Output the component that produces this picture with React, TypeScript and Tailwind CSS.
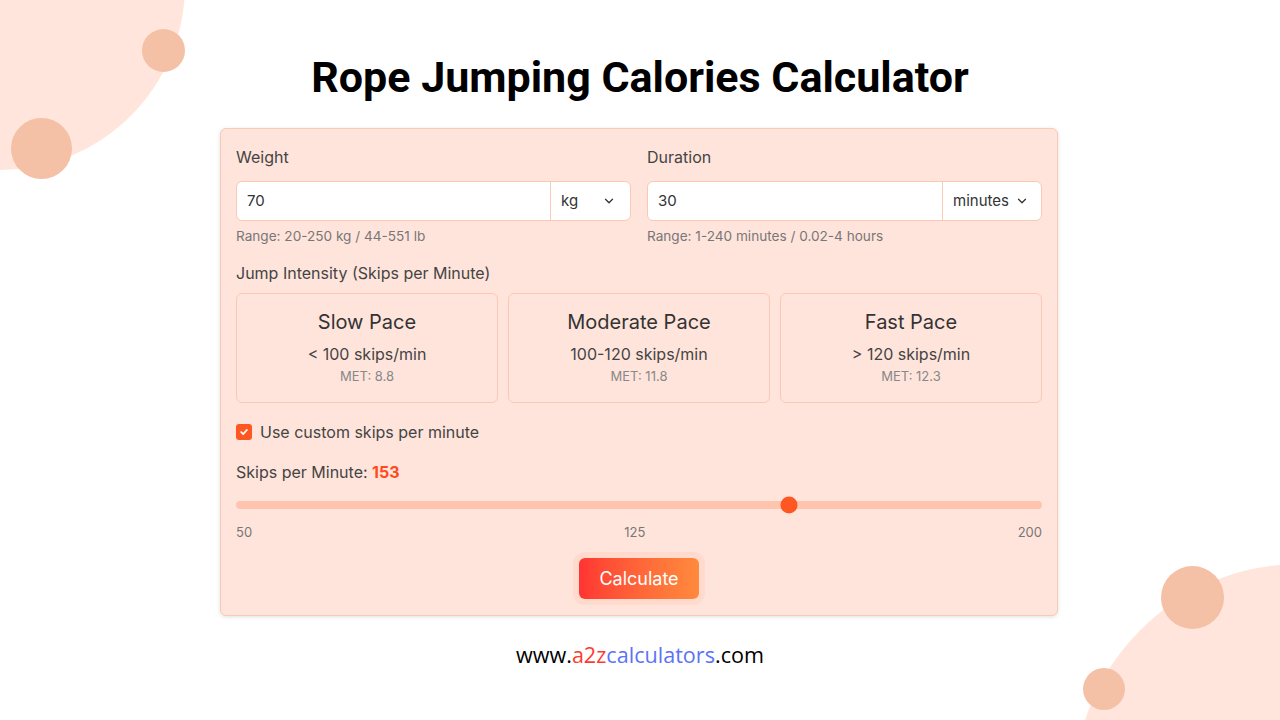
import React, { useState } from "react";

const paces = [
  { name: "Slow Pace", range: "< 100 skips/min", met: "MET: 8.8" },
  { name: "Moderate Pace", range: "100-120 skips/min", met: "MET: 11.8" },
  { name: "Fast Pace", range: "> 120 skips/min", met: "MET: 12.3" },
];

const Chevron = () => (
  <svg width="14" height="14" viewBox="0 0 24 24" fill="none" stroke="currentColor" strokeWidth={2.2} strokeLinecap="round" strokeLinejoin="round">
    <path d="M6 9l6 6 6-6" />
  </svg>
);

const App = () => {
  const [skips] = useState(153);
  const pct = ((skips - 50) / 150) * 100;

  return (
    <div className="relative w-[1280px] h-[720px] overflow-hidden bg-white font-['Inter',sans-serif]">
      {/* background decoration */}
      <div className="absolute left-[-185px] top-[-200px] w-[370px] h-[370px] rounded-full bg-[#ffe5dc]" />
      <div className="absolute left-[142px] top-[29px] w-[43px] h-[43px] rounded-full bg-[#f4c0a6]" />
      <div className="absolute left-[11px] top-[118px] w-[61px] h-[61px] rounded-full bg-[#f4c0a6]" />
      <div className="absolute left-[1074px] top-[564px] w-[452px] h-[452px] rounded-full bg-[#ffe5dc]" />
      <div className="absolute left-[1161px] top-[566px] w-[63px] h-[63px] rounded-full bg-[#f4c0a6]" />
      <div className="absolute left-[1083px] top-[668px] w-[42px] h-[42px] rounded-full bg-[#f4c0a6]" />

      <div className="relative flex flex-col items-center">
        <h1 className="mt-[52px] h-[50px] text-[43px] leading-[50px] font-bold text-black font-['Roboto',sans-serif]">
          Rope Jumping Calories Calculator
        </h1>

        <div className="mt-[26px] mr-[2px] w-[838px] rounded-md border border-[#f7cbb8] bg-[#ffe4db] shadow-[0_1px_4px_rgba(0,0,0,0.12)] px-[15px] pt-[18px] pb-[16px] text-[#333]">
          <div className="grid grid-cols-2 gap-4">
            <div>
              <div className="text-[16px] leading-5 text-[#444]">Weight</div>
              <div className="mt-[14px] flex h-[40px] rounded-md border border-[#fbc8b4] bg-white overflow-hidden">
                <div className="flex-1 flex items-center pl-[10px] text-[15px] text-[#333]">70</div>
                <div className="w-[80px] border-l border-[#fbc8b4] flex items-center justify-between pl-[10px] pr-[14px] text-[15px] text-[#333]">
                  kg
                  <Chevron />
                </div>
              </div>
              <div className="mt-[5px] text-[13.6px] leading-5 text-[#777]">Range: 20-250 kg / 44-551 lb</div>
            </div>
            <div>
              <div className="text-[16px] leading-5 text-[#444]">Duration</div>
              <div className="mt-[14px] flex h-[40px] rounded-md border border-[#fbc8b4] bg-white overflow-hidden">
                <div className="flex-1 flex items-center pl-[10px] text-[15px] text-[#333]">30</div>
                <div className="w-[99px] border-l border-[#fbc8b4] flex items-center justify-between pl-[10px] pr-[12px] text-[15px] text-[#333]">
                  minutes
                  <Chevron />
                </div>
              </div>
              <div className="mt-[5px] text-[13.6px] leading-5 text-[#777]">Range: 1-240 minutes / 0.02-4 hours</div>
            </div>
          </div>

          <div className="mt-[17px] text-[16px] leading-5 text-[#444]">Jump Intensity (Skips per Minute)</div>
          <div className="mt-[10px] grid grid-cols-3 gap-[10px]">
            {paces.map((p) => (
              <div key={p.name} className="h-[110px] rounded-md border border-[#fbc8b4] flex flex-col items-center pt-[16px]">
                <div className="text-[20px] leading-6 text-[#333]">{p.name}</div>
                <div className="mt-[10px] text-[16px] leading-5 text-[#444]">{p.range}</div>
                <div className="mt-[4px] text-[13px] leading-4 text-[#888]">{p.met}</div>
              </div>
            ))}
          </div>

          <label className="mt-[19px] flex items-center gap-2 text-[16px] leading-5 text-[#444]">
            <span className="w-4 h-4 rounded-[3px] bg-[#ff5722] flex items-center justify-center">
              <svg width="10" height="10" viewBox="0 0 24 24" fill="none" stroke="white" strokeWidth={4} strokeLinecap="round" strokeLinejoin="round">
                <path d="M5 12l5 5 9-10" />
              </svg>
            </span>
            Use custom skips per minute
          </label>

          <div className="mt-[20px] text-[16px] leading-5 text-[#444]">
            Skips per Minute: <span className="font-bold text-[#ff4a1c]">{skips}</span>
          </div>

          <div className="relative mt-[19px] h-[8px] rounded-full bg-[#ffc4ae]">
            <div
              className="absolute top-1/2 w-[17px] h-[17px] -translate-x-1/2 -translate-y-1/2 rounded-full bg-[#ff5722]"
              style={{ left: `${pct}%` }}
            />
          </div>

          <div className="mt-[15px] flex justify-between text-[13px] leading-4 text-[#777]">
            <span>50</span>
            <span>125</span>
            <span>200</span>
          </div>

          <div className="mt-[18px] flex justify-center">
            <button className="w-[120px] h-[41px] rounded-md bg-gradient-to-r from-[#ff3333] to-[#ff8a3d] text-white text-[18px] shadow-[0_0_0_6px_rgba(255,200,180,0.35)]">
              Calculate
            </button>
          </div>
        </div>

        <div className="mt-[25px] text-[21.6px] leading-7 text-black font-['Open_Sans',sans-serif]">
          www.<span className="text-[#ff3b30]">a2z</span>
          <span className="text-[#5b73f5]">calculators</span>.com
        </div>
      </div>
    </div>
  );
};

export default App;
